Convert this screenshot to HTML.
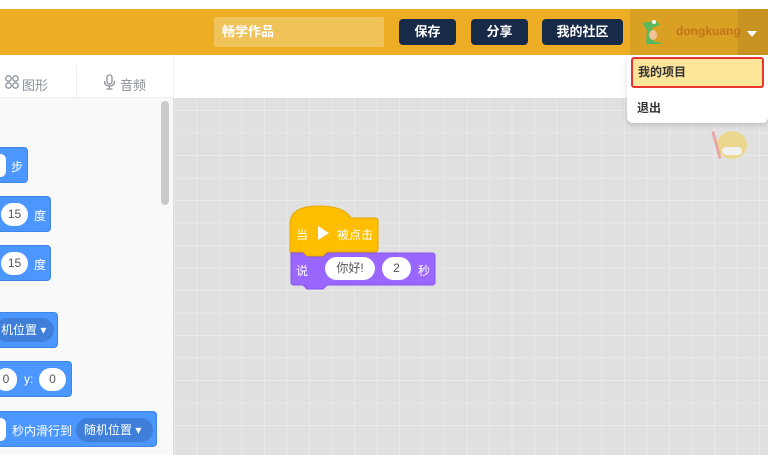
<!DOCTYPE html><html><head><meta charset="utf-8"><style>
*{margin:0;padding:0;box-sizing:border-box}
body{width:768px;height:455px;overflow:hidden;position:relative;background:#fff;font-family:"Liberation Sans","Noto Sans CJK SC",sans-serif}
.a{position:absolute}
.hdr{left:0;top:9px;width:768px;height:46px;background:#edae25}
.btn{top:19px;height:26px;background:#172a47;border-radius:4px;color:#fff;font-size:13px;font-weight:bold;text-align:center;line-height:26px}
.canvas{left:174px;top:98px;width:594px;height:357px;background-color:#e0e0e0;background-image:linear-gradient(#e9e9e9 1px,transparent 1px),linear-gradient(90deg,#e9e9e9 1px,transparent 1px);background-size:22.5px 22.5px;background-position:0 12px}
.blk{background:#4c97ff;border:1px solid #3d85e6;border-radius:4px;color:#fff;font-size:12px;height:36px}
.ov{position:absolute;background:#fff;border-radius:12px;height:23px;color:#555;font-size:12px;text-align:center;line-height:23px}
.dd{position:absolute;background:#3f7fd9;border-radius:12px;height:24px;color:#fff;font-size:12px;line-height:24px}
</style></head><body>
<div class="a hdr"></div>
<div class="a" style="left:214px;top:17px;width:170px;height:30px;background:#f0c25a;border-radius:2px;color:#fff;font-size:13px;font-weight:bold;line-height:30px;padding-left:8px">畅学作品</div>
<div class="a btn" style="left:399px;width:57px">保存</div>
<div class="a btn" style="left:471px;width:57px">分享</div>
<div class="a btn" style="left:542px;width:81px">我的社区</div>
<div class="a" style="left:630px;top:9px;width:138px;height:46px;background:#d9a024"></div>
<div class="a" style="left:738px;top:9px;width:30px;height:46px;background:#c99321"></div>
<div class="a" style="left:747px;top:31px;border:5px solid transparent;border-top:6px solid #fff;border-bottom:0"></div>
<svg class="a" style="left:640px;top:17px" width="34" height="30" viewBox="0 0 34 30"><path d="M2 6 L16 4 L20 8 L12 11 L14 24 L24 27 L6 27 L7 13 Z" fill="#5cb85c"/><ellipse cx="13" cy="18" rx="4" ry="5" fill="#f2c29a"/><circle cx="14" cy="5" r="2" fill="#fff"/></svg>
<div class="a" style="left:676px;top:24px;color:#c0741a;font-size:12px;font-weight:bold">dongkuang</div>
<div class="a" style="left:0;top:55px;width:174px;height:43px;background:#fff;border-right:1px solid #eee;border-bottom:1px solid #eee"></div>
<div class="a" style="left:76px;top:65px;width:1px;height:33px;background:#eee"></div>
<svg class="a" style="left:5px;top:75px" width="14" height="14" fill="none" stroke="#8a8f99" stroke-width="1.3"><circle cx="3.5" cy="3.5" r="2.7"/><circle cx="10.5" cy="3.5" r="2.7"/><circle cx="3.5" cy="10.5" r="2.7"/><circle cx="10.5" cy="10.5" r="2.7"/></svg>
<div class="a" style="left:22px;top:75px;font-size:13px;color:#8a8f99">图形</div>
<svg class="a" style="left:103px;top:74px" width="13" height="16" fill="none" stroke="#8a8f99" stroke-width="1.3"><rect x="4" y="1" width="5" height="9" rx="2.5"/><path d="M1.5 7 Q1.5 12 6.5 12 Q11.5 12 11.5 7 M6.5 12 V15 M3.5 15 H9.5"/></svg>
<div class="a" style="left:120px;top:75px;font-size:13px;color:#8a8f99">音频</div>
<div class="a" style="left:0;top:98px;width:174px;height:357px;background:#f9f9f9"></div>
<div class="a" style="left:161px;top:101px;width:8px;height:104px;background:#cacaca;border-radius:4px"></div>
<div class="a" style="left:173px;top:98px;width:2px;height:357px;background:#dcdcdc"></div>
<div class="a canvas"></div>
<div class="a blk" style="left:-6px;top:147px;width:34px"><div class="ov" style="left:0;top:6px;width:11px"></div><span class="a" style="left:16px;top:10px">步</span></div>
<div class="a blk" style="left:-6px;top:196px;width:57px"><div class="ov" style="left:6px;top:6px;width:27px">15</div><span class="a" style="left:39px;top:10px">度</span></div>
<div class="a blk" style="left:-6px;top:245px;width:57px"><div class="ov" style="left:6px;top:6px;width:27px">15</div><span class="a" style="left:39px;top:10px">度</span></div>
<div class="a blk" style="left:-6px;top:312px;width:64px"><div class="dd" style="left:0;top:5px;width:59px;padding-left:6px">机位置 ▾</div></div>
<div class="a blk" style="left:-6px;top:361px;width:78px"><div class="ov" style="left:0;top:6px;width:22px">0</div><span class="a" style="left:29px;top:10px">y:</span><div class="ov" style="left:44px;top:6px;width:27px">0</div></div>
<div class="a blk" style="left:-6px;top:411px;width:163px"><div class="ov" style="left:0;top:6px;width:11px"></div><span class="a" style="left:17px;top:10px">秒内滑行到</span><div class="dd" style="left:81px;top:6px;width:77px;padding-left:8px">随机位置 ▾</div></div>
<svg class="a" style="left:289px;top:202px" width="148" height="92"><path d="M2 51 L14 51 L18 55 L34 55 L38 51 L143 51 Q146 51 146 54 L146 80 Q146 83 143 83 L38 83 L34 87 L18 87 L14 83 L5 83 Q2 83 2 80 Z" fill="#9966ff" stroke="#8855ee"/><path d="M1 22 Q1 4 30 4 Q55 4 62 16 L86 16 Q89 16 89 19 L89 47 Q89 50 86 50 L38 50 L34 54 L18 54 L14 50 L1 50 Z" fill="#ffbf00" stroke="#e6a800"/><path d="M29 24 L40 31 L29 38 Z" fill="#fff"/></svg>
<div class="a" style="left:296px;top:226px;color:#fff;font-size:12px">当</div>
<div class="a" style="left:337px;top:226px;color:#fff;font-size:12px">被点击</div>
<div class="a" style="left:296px;top:262px;color:#fff;font-size:12px">说</div>
<div class="ov" style="left:325px;top:257px;width:50px">你好!</div>
<div class="ov" style="left:382px;top:257px;width:29px">2</div>
<div class="a" style="left:418px;top:262px;color:#fff;font-size:12px">秒</div>
<svg class="a" style="left:710px;top:125px;opacity:.55" width="40" height="38"><ellipse cx="22" cy="20" rx="15" ry="14" fill="#f5cf4a"/><rect x="5" y="6" width="3" height="28" fill="#e77" transform="rotate(-15 6 20)"/><rect x="12" y="22" width="20" height="8" rx="4" fill="#fff"/></svg>
<div class="a" style="left:627px;top:55px;width:141px;height:68px;background:#fff;border-radius:6px;box-shadow:0 2px 6px rgba(0,0,0,.15)"></div>
<div class="a" style="left:631px;top:57px;width:133px;height:31px;background:#fde59a;border:2px solid #e8332e;border-radius:3px;font-size:12px;font-weight:bold;color:#333;line-height:27px;padding-left:5px">我的项目</div>
<div class="a" style="left:637px;top:99px;font-size:12px;font-weight:bold;color:#333">退出</div>
</body></html>
